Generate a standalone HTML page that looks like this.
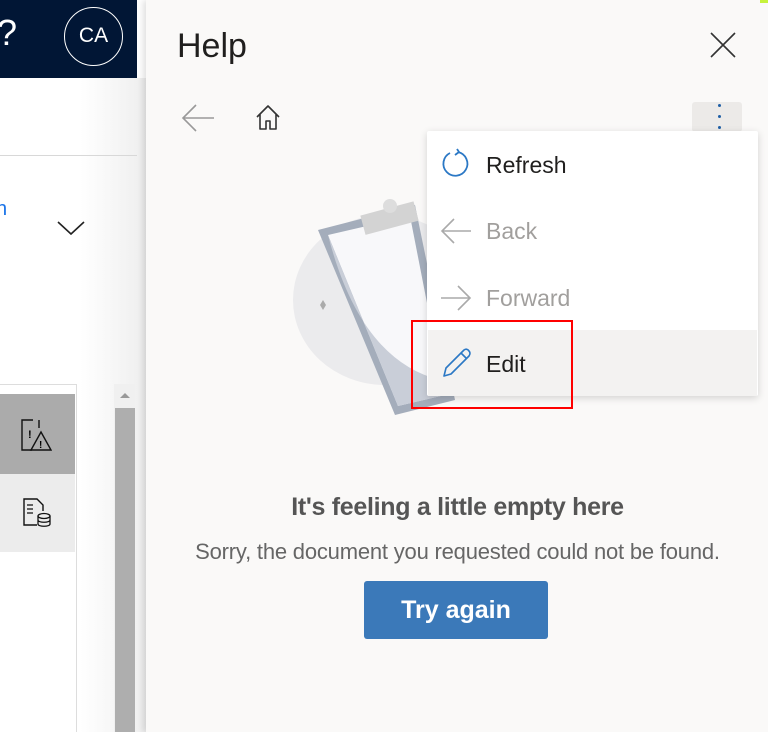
<!DOCTYPE html>
<html><head><meta charset="utf-8"><style>
*{margin:0;padding:0;box-sizing:border-box}
body{width:768px;height:732px;overflow:hidden;position:relative;background:#fff;font-family:"Liberation Sans",sans-serif}
.abs{position:absolute}
</style></head><body>
<div class="abs" style="left:0;top:0;width:137px;height:78px;background:#011635"></div>
<div class="abs" style="left:-3px;top:12px;color:#fff;font-size:36px;font-weight:300">?</div>
<div class="abs" style="left:64px;top:7px;width:59px;height:59px;border:1.5px solid #fff;border-radius:50%;color:#fff;font-size:21px;text-align:center;line-height:56px">CA</div>
<div class="abs" style="left:0;top:78px;width:147px;height:654px;background:linear-gradient(to right,#fff 0,#fff 80px,#eee 147px)"></div>
<div class="abs" style="left:0;top:155px;width:137px;height:1px;background:#d8d8d8"></div>
<div class="abs" style="left:-4px;top:198px;color:#1a73e8;font-size:20px">n</div>
<svg class="abs" style="left:56px;top:219px" width="30" height="18"><path d="M2 3 L15 15 L28 3" fill="none" stroke="#222" stroke-width="1.6"/></svg>
<div class="abs" style="left:0;top:384px;width:77px;height:348px;background:#fff;border-right:1px solid #ddd;border-top:1px solid #ddd"></div>
<div class="abs" style="left:0;top:394px;width:75px;height:80px;background:#ababab"></div>
<div class="abs" style="left:0;top:474px;width:75px;height:78px;background:#ececec"></div>
<svg class="abs" style="left:20px;top:418px" width="32" height="34"><path d="M13 2H2V32h10" fill="none" stroke="#111" stroke-width="1.4"/><path d="M19 2v8" stroke="#111" stroke-width="1.4"/><path d="M21 14 L31 32 H11 Z" fill="none" stroke="#111" stroke-width="1.4"/><text x="8" y="20" font-size="11" font-family="Liberation Sans" font-weight="bold">!</text><text x="19" y="30" font-size="10" font-family="Liberation Sans" font-weight="bold">!</text></svg>
<svg class="abs" style="left:22px;top:497px" width="30" height="32"><path d="M15 28H2V2h13l6 6v6" fill="none" stroke="#111" stroke-width="1.4"/><path d="M5 8h6M5 12h6M5 16h6" stroke="#111" stroke-width="1.2"/><ellipse cx="22" cy="19" rx="6" ry="2.5" fill="none" stroke="#111" stroke-width="1.3"/><path d="M16 19v8c0 3 12 3 12 0v-8M16 23c0 3 12 3 12 0" fill="none" stroke="#111" stroke-width="1.3"/></svg>
<div class="abs" style="left:114px;top:384px;width:21px;height:348px;background:#f0f0f0"></div>
<div class="abs" style="left:115px;top:408px;width:20px;height:324px;background:#aeaeae"></div>
<svg class="abs" style="left:119px;top:392px" width="12" height="8"><path d="M1 6 L6 1 L11 6Z" fill="#999"/></svg>
<div class="abs" style="left:146px;top:0;width:622px;height:732px;background:#faf9f8;box-shadow:-3px 0 6px rgba(0,0,0,.12)"></div>
<div class="abs" style="left:177px;top:27px;font-size:34px;color:#201f1e">Help</div>
<svg class="abs" style="left:709px;top:31px" width="28" height="28"><path d="M2 2L26 26M26 2L2 26" stroke="#333" stroke-width="1.6"/></svg>
<svg class="abs" style="left:181px;top:103px" width="34" height="30"><path d="M33 15H2M15 2L2 15L15 28" fill="none" stroke="#999" stroke-width="1.6"/></svg>
<svg class="abs" style="left:254px;top:104px" width="30" height="28"><path d="M3 13L14 2L25 13M6 10V25H12V17H16V25H22V10" fill="none" stroke="#333" stroke-width="1.6" stroke-linejoin="round"/></svg>
<div class="abs" style="left:692px;top:102px;width:50px;height:30px;background:#eceae8;border-radius:3px"></div>
<div class="abs" style="left:718px;top:104px;width:3px;height:3px;border-radius:50%;background:#1f5fa6"></div>
<div class="abs" style="left:718px;top:115px;width:3px;height:3px;border-radius:50%;background:#1f5fa6"></div>
<div class="abs" style="left:718px;top:126px;width:3px;height:3px;border-radius:50%;background:#1f5fa6"></div>
<svg class="abs" style="left:290px;top:180px" width="170" height="240">
<ellipse cx="95" cy="120" rx="92" ry="85" fill="#ebebed"/>
<path d="M30 125l3-5 3 5-3 5z" fill="#aaa"/>
<path d="M28 50L125 25L165 220L105 235Z" fill="#a4adbb"/>
<path d="M38 55L120 36L155 215L108 226Z" fill="#f8f8fa"/>
<path d="M38 55Q70 180 150 200L155 215L108 226Z" fill="#c9ced8"/>
<rect x="72" y="28" width="55" height="20" fill="#d3d3d3" transform="rotate(-15 100 38)"/>
<circle cx="100" cy="26" r="7" fill="#ddd"/>
</svg>
<div class="abs" style="left:427px;top:131px;width:331px;height:265px;background:#fff;box-shadow:0 2px 8px rgba(0,0,0,.16);border-radius:2px"></div>
<div class="abs" style="left:428px;top:330px;width:329px;height:66px;background:#f3f2f1"></div>
<svg class="abs" style="left:440px;top:148px" width="32" height="32"><path d="M10 5 A12 12 0 1 0 18 4" fill="none" stroke="#2b78c5" stroke-width="1.8"/><path d="M17 1 L19 4 L15 7" fill="none" stroke="#2b78c5" stroke-width="1.8"/></svg>
<div class="abs" style="left:486px;top:152px;font-size:23px;color:#201f1e">Refresh</div>
<svg class="abs" style="left:440px;top:217px" width="32" height="28"><path d="M31 14H2M14 2L2 14L14 26" fill="none" stroke="#aaa" stroke-width="1.6"/></svg>
<div class="abs" style="left:486px;top:218px;font-size:23px;color:#a19f9d">Back</div>
<svg class="abs" style="left:440px;top:284px" width="32" height="28"><path d="M1 14H30M18 2L30 14L18 26" fill="none" stroke="#aaa" stroke-width="1.6"/></svg>
<div class="abs" style="left:486px;top:285px;font-size:23px;color:#a19f9d">Forward</div>
<svg class="abs" style="left:441px;top:347px" width="32" height="32"><path d="M3 29L5 21L23 3Q26 1 28 4Q30 6 28 9L10 27Z M20 6L25 11" fill="none" stroke="#2b78c5" stroke-width="1.6" stroke-linejoin="round"/></svg>
<div class="abs" style="left:486px;top:351px;font-size:23px;color:#201f1e">Edit</div>
<div class="abs" style="left:411px;top:320px;width:162px;height:89px;border:2px solid #f00"></div>
<div class="abs" style="left:147px;top:493px;width:621px;text-align:center;font-size:25px;font-weight:bold;color:#555;letter-spacing:-0.3px">It's feeling a little empty here</div>
<div class="abs" style="left:147px;top:539px;width:621px;text-align:center;font-size:22px;color:#666;letter-spacing:-0.2px">Sorry, the document you requested could not be found.</div>
<div class="abs" style="left:364px;top:581px;width:184px;height:58px;background:#3b79b9;border-radius:3px;color:#fff;font-size:25px;font-weight:bold;text-align:center;line-height:58px">Try again</div>
<div class="abs" style="left:760px;top:0;width:8px;height:3px;background:#c6f23c"></div>
</body></html>
